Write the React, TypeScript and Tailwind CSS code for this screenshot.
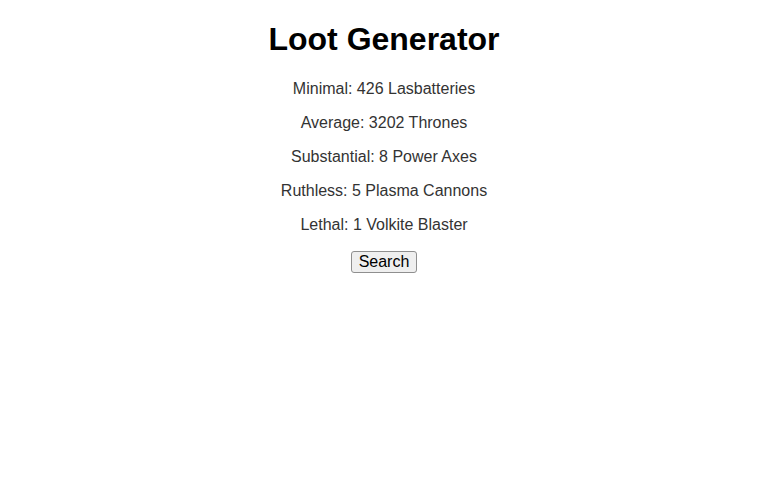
export default function App() {
  const items = [
    "Minimal: 426 Lasbatteries",
    "Average: 3202 Thrones",
    "Substantial: 8 Power Axes",
    "Ruthless: 5 Plasma Cannons",
    "Lethal: 1 Volkite Blaster",
  ];
  return (
    <div className="min-h-[480px] bg-white text-center font-['Liberation_Sans',Arial,sans-serif] text-black">
      <h1 className="my-[21.44px] text-[32px] font-bold leading-[37px] text-black">
        Loot Generator
      </h1>
      {items.map((t) => (
        <p key={t} className="my-4 text-base leading-[18px] text-[#333]">
          {t}
        </p>
      ))}
      <div>
        <button className="rounded-[3px] border border-[#8f8f8f] bg-[#efefef] px-[7px] py-[1px] text-base leading-[18px] text-black">
          Search
        </button>
      </div>
    </div>
  );
}
